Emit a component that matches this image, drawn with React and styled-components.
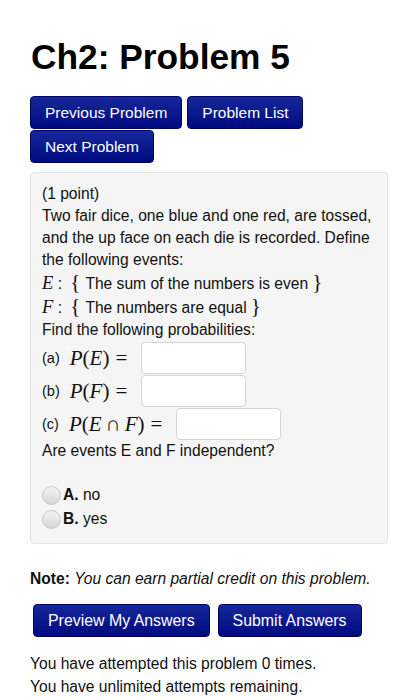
import React from 'react';
import styled, { createGlobalStyle } from 'styled-components';

const Global = createGlobalStyle`
    body {
        margin: 0;
        background: #fff;
        font-family: "Liberation Sans", Arial, sans-serif;
        color: #111;
    }
`

const Page = styled.div`
    padding: 0 0 0 30px;
    width: 358px;
`

const Title = styled.h1`
    margin: 37px 0 19px 1px;
    font-size: 35.3px;
    line-height: 40px;
    font-weight: bold;
    color: #000;
`

const ButtonRow = styled.div`
    display: flex;
    flex-wrap: wrap;
    column-gap: ${props => props.gap || 5}px;
    row-gap: 1px;
    margin-left: ${props => props.indent || 0}px;
`

const Button = styled.button`
    height: 33px;
    padding: 0 14px;
    border: 1px solid #00065e;
    border-radius: 4px;
    background: linear-gradient(#16289a, #000a80);
    color: #fff;
    font-family: "Liberation Sans", Arial, sans-serif;
    font-size: ${props => props.big ? 15.9 : 15.5}px;
    line-height: 31px;
    white-space: nowrap;
`

const Panel = styled.div`
    margin-top: 9px;
    padding: 10px 11px 12px 11px;
    background: #f5f5f5;
    border: 1px solid #e3e3e3;
    border-radius: 4px;
    font-size: 15.6px;
    line-height: 22px;
`

const Line = styled.div`
    min-height: 22px;
`

const Math = styled.span`
    font-family: "Liberation Serif", "Times New Roman", serif;
    font-size: ${props => props.size || 18.5}px;
    font-style: ${props => props.upright ? 'normal' : 'italic'};
`

const Op = styled.span`
    font-family: "Liberation Serif", "Times New Roman", serif;
    font-size: 21px;
    margin: 0 ${props => props.space || 6}px;
`

const Brace = styled.span`
    font-family: "Liberation Serif", serif;
    font-size: 21px;
    margin: 0 5px 0 4px;
`

const AnswerRow = styled.div`
    display: flex;
    align-items: center;
    height: 33px;
`

const Part = styled.span`
    font-size: 14.5px;
    margin-right: 10px;
`

const Answer = styled.div`
    width: 105px;
    height: 32px;
    margin-left: 8px;
    box-sizing: border-box;
    background: #fff;
    border: 1px solid #d4d4d4;
    border-radius: 4px;
`

const Spacer = styled.div`
    height: 21px;
`

const Choice = styled.label`
    display: flex;
    align-items: center;
    height: 24px;
`

const Radio = styled.span`
    width: 19px;
    height: 19px;
    margin-right: 2px;
    border-radius: 50%;
    border: 1px solid #c8c8c8;
    box-sizing: border-box;
    background: linear-gradient(#f4f4f4, #d6d6d6);
`

const Note = styled.p`
    margin: 24px 0 14px 0;
    font-size: 15.6px;
    line-height: 22px;
`

const Info = styled.div`
    margin-top: 15px;
    font-size: 15.6px;
    line-height: 23px;
`

const Prob = ({ children }) => (
    <>
        <Math size={21}>P</Math>
        <Math size={21} upright>(</Math>
        {children}
        <Math size={21} upright>)</Math>
        <Op>=</Op>
    </>
)

const App = () => {
    return (
        <Page>
            <Global />
            <Title>Ch2: Problem 5</Title>
            <ButtonRow>
                <Button>Previous Problem</Button>
                <Button>Problem List</Button>
                <Button>Next Problem</Button>
            </ButtonRow>

            <Panel>
                <Line>(1 point)</Line>
                <Line>Two fair dice, one blue and one red, are tossed, and the up face on each die is recorded. Define the following events:</Line>
                <Line>
                    <Math>E</Math> : <Brace>{'{'}</Brace>The sum of the numbers is even<Brace>{'}'}</Brace>
                </Line>
                <Line>
                    <Math>F</Math> : <Brace>{'{'}</Brace>The numbers are equal<Brace>{'}'}</Brace>
                </Line>
                <Line>Find the following probabilities:</Line>
                <AnswerRow>
                    <Part>(a)</Part>
                    <Prob><Math size={21}>E</Math></Prob>
                    <Answer />
                </AnswerRow>
                <AnswerRow>
                    <Part>(b)</Part>
                    <Prob><Math size={21}>F</Math></Prob>
                    <Answer />
                </AnswerRow>
                <AnswerRow>
                    <Part>(c)</Part>
                    <Prob>
                        <Math size={21}>E</Math>
                        <Op space={4}>∩</Op>
                        <Math size={21}>F</Math>
                    </Prob>
                    <Answer />
                </AnswerRow>
                <Line>Are events E and F independent?</Line>
                <Spacer />
                <Choice><Radio /><b>A.</b>&nbsp;no</Choice>
                <Choice><Radio /><b>B.</b>&nbsp;yes</Choice>
            </Panel>

            <Note><b>Note:</b> <i>You can earn partial credit on this problem.</i></Note>
            <ButtonRow gap={8} indent={3}>
                <Button big>Preview My Answers</Button>
                <Button big>Submit Answers</Button>
            </ButtonRow>
            <Info>
                You have attempted this problem 0 times.<br />
                You have unlimited attempts remaining.
            </Info>
        </Page>
    )
}

export default App
